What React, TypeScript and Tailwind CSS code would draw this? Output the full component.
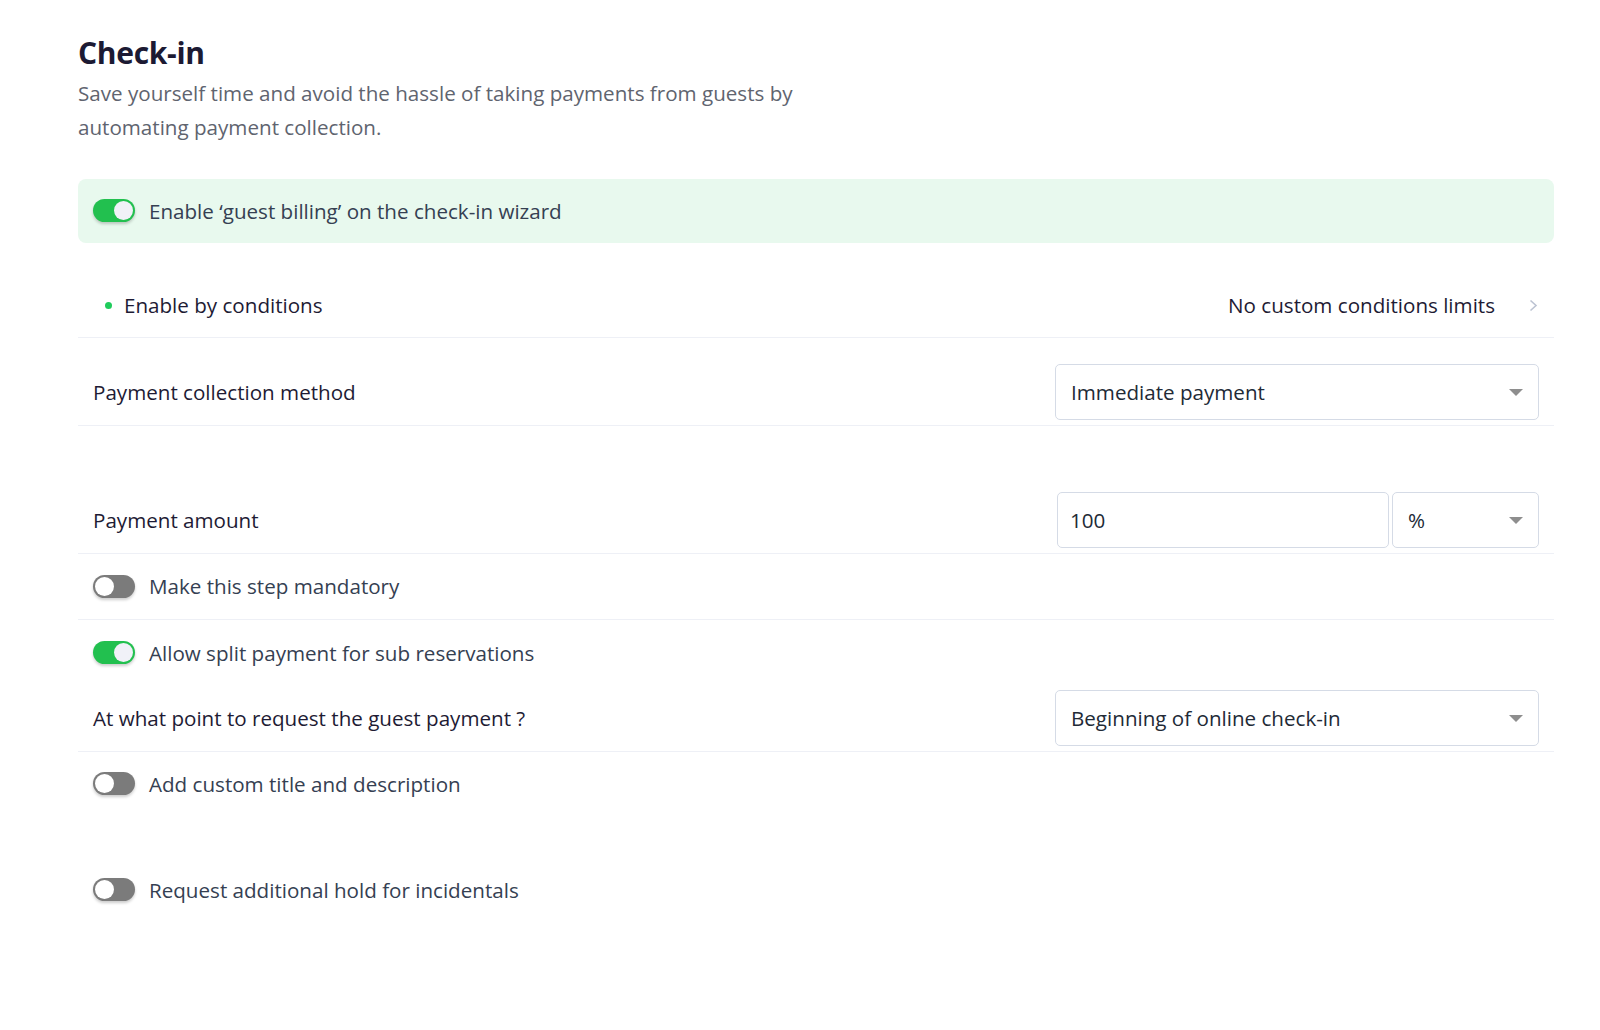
import React from 'react';

function Toggle({ on }: { on: boolean }) {
  return (
    <div
      className={`relative w-[42px] h-[23px] shrink-0 rounded-full shadow-[0_2px_3px_rgba(0,0,0,0.2)] ${
        on ? 'bg-[#22c04f]' : 'bg-[#7b7b7b]'
      }`}
    >
      <div
        className={`absolute top-[2px] w-[19px] h-[19px] rounded-full ${
          on ? 'right-[2px] bg-[#f1f1f8]' : 'left-[2px] bg-white'
        }`}
      />
    </div>
  );
}

function Caret() {
  return (
    <svg width="14" height="7" viewBox="0 0 14 7" className="shrink-0">
      <path d="M0 0 L14 0 L7 7 Z" fill="#8e8e8e" />
    </svg>
  );
}

function Select({ value, className }: { value: string; className: string }) {
  return (
    <div
      className={`flex items-center justify-between h-[56px] pl-[15px] pr-[15px] border border-[#d5dbe6] rounded-[5px] bg-white text-[20.6px] text-[#222a36] ${className}`}
    >
      <span>{value}</span>
      <Caret />
    </div>
  );
}

function ToggleRow({ on, label }: { on: boolean; label: string }) {
  return (
    <div className="flex items-center gap-[14px] pl-[15px]">
      <Toggle on={on} />
      <span className="text-[20.6px] text-[#354052]">{label}</span>
    </div>
  );
}

export default function App() {
  return (
    <div className="min-h-screen bg-white font-['Open_Sans',sans-serif] pl-[78px] pr-[46px] pt-[35px]">
      {/* Header */}
      <h1 className="text-[30px] font-bold leading-[36px] text-[#1c1a33] tracking-[-0.3px]">Check-in</h1>
      <p className="mt-[5px] max-w-[760px] text-[20.6px] leading-[34px] text-[#60646f]">
        Save yourself time and avoid the hassle of taking payments from guests by automating payment collection.
      </p>

      {/* Banner */}
      <div className="mt-[35px] h-[64px] flex items-center rounded-[8px] bg-[#e8f9ee]">
        <ToggleRow on label="Enable ‘guest billing’ on the check-in wizard" />
      </div>

      {/* Conditions */}
      <div className="mt-[31px] h-[64px] flex items-center justify-between border-b border-[#eef0f6] pl-[27px] pr-[16px]">
        <div className="flex items-center gap-[12px]">
          <span className="w-[7px] h-[7px] rounded-full bg-[#1fcc5c]" />
          <span className="text-[20.6px] text-[#1e1b34]">Enable by conditions</span>
        </div>
        <div className="flex items-center gap-[34px]">
          <span className="text-[20.6px] text-[#1e1b34]">No custom conditions limits</span>
          <svg width="9" height="13" viewBox="0 0 9 13">
            <path d="M1.5 1.5 L7 6.5 L1.5 11.5" fill="none" stroke="#bcc3d2" strokeWidth="1.6" />
          </svg>
        </div>
      </div>

      {/* Collection method */}
      <div className="pt-[26px] pb-[5px] flex items-center justify-between border-b border-[#eef0f6] pl-[15px] pr-[15px]">
        <span className="text-[20.6px] text-[#1e1b34]">Payment collection method</span>
        <Select value="Immediate payment" className="w-[484px]" />
      </div>

      {/* Amount */}
      <div className="pt-[66px] pb-[5px] flex items-center justify-between border-b border-[#eef0f6] pl-[15px] pr-[15px]">
        <span className="text-[20.6px] text-[#1e1b34]">Payment amount</span>
        <div className="flex gap-[3px]">
          <div className="w-[332px] h-[56px] flex items-center pl-[12px] border border-[#d5dbe6] rounded-[5px] text-[20.6px] text-[#222a36]">
            100
          </div>
          <Select value="%" className="w-[147px]" />
        </div>
      </div>

      {/* Mandatory */}
      <div className="h-[66px] flex items-center border-b border-[#eef0f6]">
        <ToggleRow on={false} label="Make this step mandatory" />
      </div>

      {/* Split payment */}
      <div className="border-b border-[#eef0f6] pb-[5px]">
        <div className="h-[70px] pb-[4px] flex items-center">
          <ToggleRow on label="Allow split payment for sub reservations" />
        </div>
        <div className="flex items-center justify-between pl-[15px] pr-[15px]">
          <span className="text-[20.6px] text-[#1e1b34]">At what point to request the guest payment ?</span>
          <Select value="Beginning of online check-in" className="w-[484px]" />
        </div>
      </div>

      {/* Custom title */}
      <div className="h-[64px] flex items-center">
        <ToggleRow on={false} label="Add custom title and description" />
      </div>

      {/* Incidentals */}
      <div className="mt-[41px] h-[66px] flex items-center">
        <ToggleRow on={false} label="Request additional hold for incidentals" />
      </div>
    </div>
  );
}
